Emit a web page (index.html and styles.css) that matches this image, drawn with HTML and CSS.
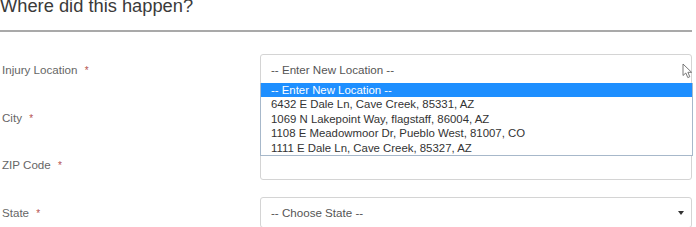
FILE: index.html
```html
<!DOCTYPE html>
<html>
<head>
<meta charset="utf-8">
<link rel="stylesheet" href="styles.css">
</head>
<body>
<div class="page">
  <h2 class="title">Where did this happen?</h2>
  <div class="form">
    <div class="row">
      <label class="label">Injury Location <span class="req">*</span></label>
      <div class="field">
        <div class="control">-- Enter New Location --</div>
        <ul class="dropdown">
          <li class="opt selected">-- Enter New Location --</li>
          <li class="opt">6432 E Dale Ln, Cave Creek, 85331, AZ</li>
          <li class="opt">1069 N Lakepoint Way, flagstaff, 86004, AZ</li>
          <li class="opt">1108 E Meadowmoor Dr, Pueblo West, 81007, CO</li>
          <li class="opt">1111 E Dale Ln, Cave Creek, 85327, AZ</li>
        </ul>
        <svg class="cursor" width="12" height="16" viewBox="0 0 12 16">
          <path d="M1 1 L1 12.5 L3.8 10 L5.8 14.6 L7.8 13.7 L5.9 9.3 L9.6 9.3 Z" fill="#fff" stroke="#6a6a6a" stroke-width="0.9" stroke-linejoin="round"/>
        </svg>
      </div>
    </div>
    <div class="row">
      <label class="label">City <span class="req">*</span></label>
      <div class="field"><div class="control"></div></div>
    </div>
    <div class="row">
      <label class="label">ZIP Code <span class="req">*</span></label>
      <div class="field"><div class="control"></div></div>
    </div>
    <div class="row">
      <label class="label">State <span class="req">*</span></label>
      <div class="field"><div class="control select">-- Choose State --<span class="caret"></span></div></div>
    </div>
  </div>
</div>
</body>
</html>
```
FILE: styles.css
```css
html, body {
  margin: 0;
  padding: 0;
  background: #fff;
  overflow: hidden;
}
body {
  font-family: "Liberation Sans", Arial, sans-serif;
}
.page {
  width: 696px;
  height: 227px;
  overflow: hidden;
}
.title {
  margin: -3px 4px 0 0;
  padding: 0 0 15px 0;
  font-size: 18.3px;
  line-height: 18px;
  font-weight: normal;
  color: #3a3a3a;
  border-bottom: 2px solid #a9a9a9;
}
.form {
  margin-top: 22px;
}
.row {
  display: grid;
  grid-template-columns: 260px 432px;
  align-items: center;
  height: 31px;
  margin-bottom: 16.5px;
}
.label {
  padding-left: 2px;
  font-size: 11.6px;
  color: #666;
}
.req {
  color: #b5514f;
  margin-left: 4px;
  font-size: 10px;
}
.field {
  position: relative;
  height: 31px;
}
.control {
  box-sizing: border-box;
  height: 31px;
  border: 1px solid #d4d4d4;
  border-radius: 3px;
  background: #fff;
  padding-left: 10px;
  font-size: 11.6px;
  line-height: 29px;
  color: #555;
  position: relative;
}
.caret {
  position: absolute;
  right: 7px;
  top: 13px;
  width: 0;
  height: 0;
  border-left: 3px solid transparent;
  border-right: 3px solid transparent;
  border-top: 4px solid #333;
}
.dropdown {
  position: absolute;
  left: 0;
  top: 29px;
  width: 431px;
  margin: 0;
  padding: 0;
  list-style: none;
  background: #fff;
  border: 1px solid #a7b8ca;
  border-top: 0;
  z-index: 5;
}
.opt {
  height: 14.4px;
  line-height: 14.4px;
  padding-left: 10px;
  font-size: 11.4px;
  color: #333;
  white-space: nowrap;
}
.opt.selected {
  background: #1e8fff;
  color: #fff;
}
.cursor {
  position: absolute;
  left: 422px;
  top: 9px;
  z-index: 6;
}
```
